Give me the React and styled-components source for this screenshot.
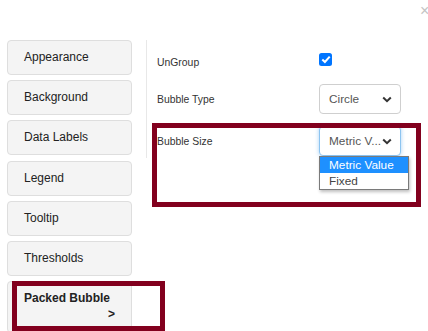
import React from "react";
import styled, { createGlobalStyle } from "styled-components";

const Global = createGlobalStyle`
  html, body { margin: 0; padding: 0; background: #fff; }
  body { font-family: "Liberation Sans", Arial, sans-serif; overflow: hidden; }
  * { box-sizing: border-box; }
`;

const Page = styled.div`
  position: relative;
  width: 428px;
  height: 331px;
  overflow: hidden;
  padding: 40px 0 0 7px;
  display: flex;
  align-items: flex-start;
  gap: 14px;
`;

const Close = styled.span`
  position: absolute;
  top: 3px;
  left: 420px;
  font-size: 16px;
  color: #c4c4c4;
  line-height: 1;
`;

const Sidebar = styled.nav`
  width: 125px;
  display: flex;
  flex-direction: column;
  gap: 5.2px;
`;

const NavButton = styled.div`
  height: ${(p) => (p.$tall ? "auto" : "35px")};
  padding: ${(p) => (p.$tall ? "9px 0 10px 16px" : "0 0 0 16px")};
  display: flex;
  flex-direction: column;
  justify-content: center;
  background: #f4f4f4;
  border: 1px solid #dedede;
  border-radius: 4px;
  font-size: 12px;
  line-height: 15px;
  color: #222;
  font-weight: ${(p) => (p.$active ? 700 : 400)};
`;

const Arrow = styled.span`
  align-self: flex-start;
  padding-left: 84px;
  margin-top: 1px;
`;

const Panel = styled.section`
  border-left: 1px solid #e8e8e8;
  padding: 6px 0 2px 10px;
  display: flex;
  flex-direction: column;
`;

const Row = styled.div`
  display: grid;
  grid-template-columns: 162px auto;
  align-items: center;
  height: 30px;
  margin-top: ${(p) => p.$mt || 0}px;
`;

const Label = styled.span`
  font-size: 10.4px;
  color: #333;
  padding-top: ${(p) => p.$pt || 0}px;
`;

const Check = styled.span`
  width: 13px;
  height: 13px;
  margin-top: -3px;
  border-radius: 2.5px;
  background: #0075ff;
  display: flex;
  align-items: center;
  justify-content: center;
`;

const SelectWrap = styled.div`
  position: relative;
  width: 82px;
`;

const SelectBox = styled.div`
  height: 30px;
  border: 1px solid ${(p) => (p.$focus ? "#8cc4f0" : "#cfcfcf")};
  box-shadow: ${(p) => (p.$focus ? "0 0 4px rgba(60,150,230,0.45)" : "none")};
  border-radius: 4px;
  padding: 0 8px 0 9px;
  display: flex;
  align-items: center;
  justify-content: space-between;
  font-size: 11.8px;
  color: #555;
  background: #fff;
`;

const Options = styled.div`
  position: absolute;
  top: 30px;
  left: 0;
  width: 90px;
  border: 1px solid #7a7a7a;
  background: #fff;
  box-shadow: 1px 2px 3px rgba(0, 0, 0, 0.25);
  z-index: 2;
`;

const Option = styled.div`
  height: 16px;
  line-height: 16px;
  padding-left: 9px;
  font-size: 11.8px;
  color: ${(p) => (p.$sel ? "#fff" : "#444")};
  background: ${(p) => (p.$sel ? "#1e90ff" : "#fff")};
`;

const Highlight = styled.div`
  position: absolute;
  left: ${(p) => p.$x}px;
  top: ${(p) => p.$y}px;
  width: ${(p) => p.$w}px;
  height: ${(p) => p.$h}px;
  border: 5px solid #82001e;
  pointer-events: none;
  z-index: ${(p) => p.$z || 1};
`;

const Chevron = () => (
  <svg width="10" height="7" viewBox="0 0 10 7">
    <path d="M1.2 1.5 L5 5.2 L8.8 1.5" fill="none" stroke="#333" strokeWidth="2" />
  </svg>
);

export default function App() {
  return (
    <>
      <Global />
      <Page>
        <Close>×</Close>
        <Sidebar>
          <NavButton>Appearance</NavButton>
          <NavButton>Background</NavButton>
          <NavButton>Data Labels</NavButton>
          <NavButton>Legend</NavButton>
          <NavButton>Tooltip</NavButton>
          <NavButton>Thresholds</NavButton>
          <NavButton $tall $active>
            <span>Packed Bubble</span>
            <Arrow>&gt;</Arrow>
          </NavButton>
        </Sidebar>
        <Panel>
          <Row>
            <Label $pt={3}>UnGroup</Label>
            <Check>
              <svg width="10" height="9" viewBox="0 0 10 9">
                <path d="M1.3 4.6 L3.9 7 L8.7 1.6" fill="none" stroke="#fff" strokeWidth="2" />
              </svg>
            </Check>
          </Row>
          <Row $mt={8}>
            <Label>Bubble Type</Label>
            <SelectWrap>
              <SelectBox>
                <span>Circle</span>
                <Chevron />
              </SelectBox>
            </SelectWrap>
          </Row>
          <Row $mt={12}>
            <Label>Bubble Size</Label>
            <SelectWrap>
              <SelectBox $focus>
                <span>Metric V...</span>
                <Chevron />
              </SelectBox>
              <Options>
                <Option $sel>Metric Value</Option>
                <Option>Fixed</Option>
              </Options>
            </SelectWrap>
          </Row>
        </Panel>
        <Highlight $x={152} $y={123} $w={269} $h={84} $z={1} />
        <Highlight $x={12} $y={281} $w={153} $h={50} $z={3} />
      </Page>
    </>
  );
}
